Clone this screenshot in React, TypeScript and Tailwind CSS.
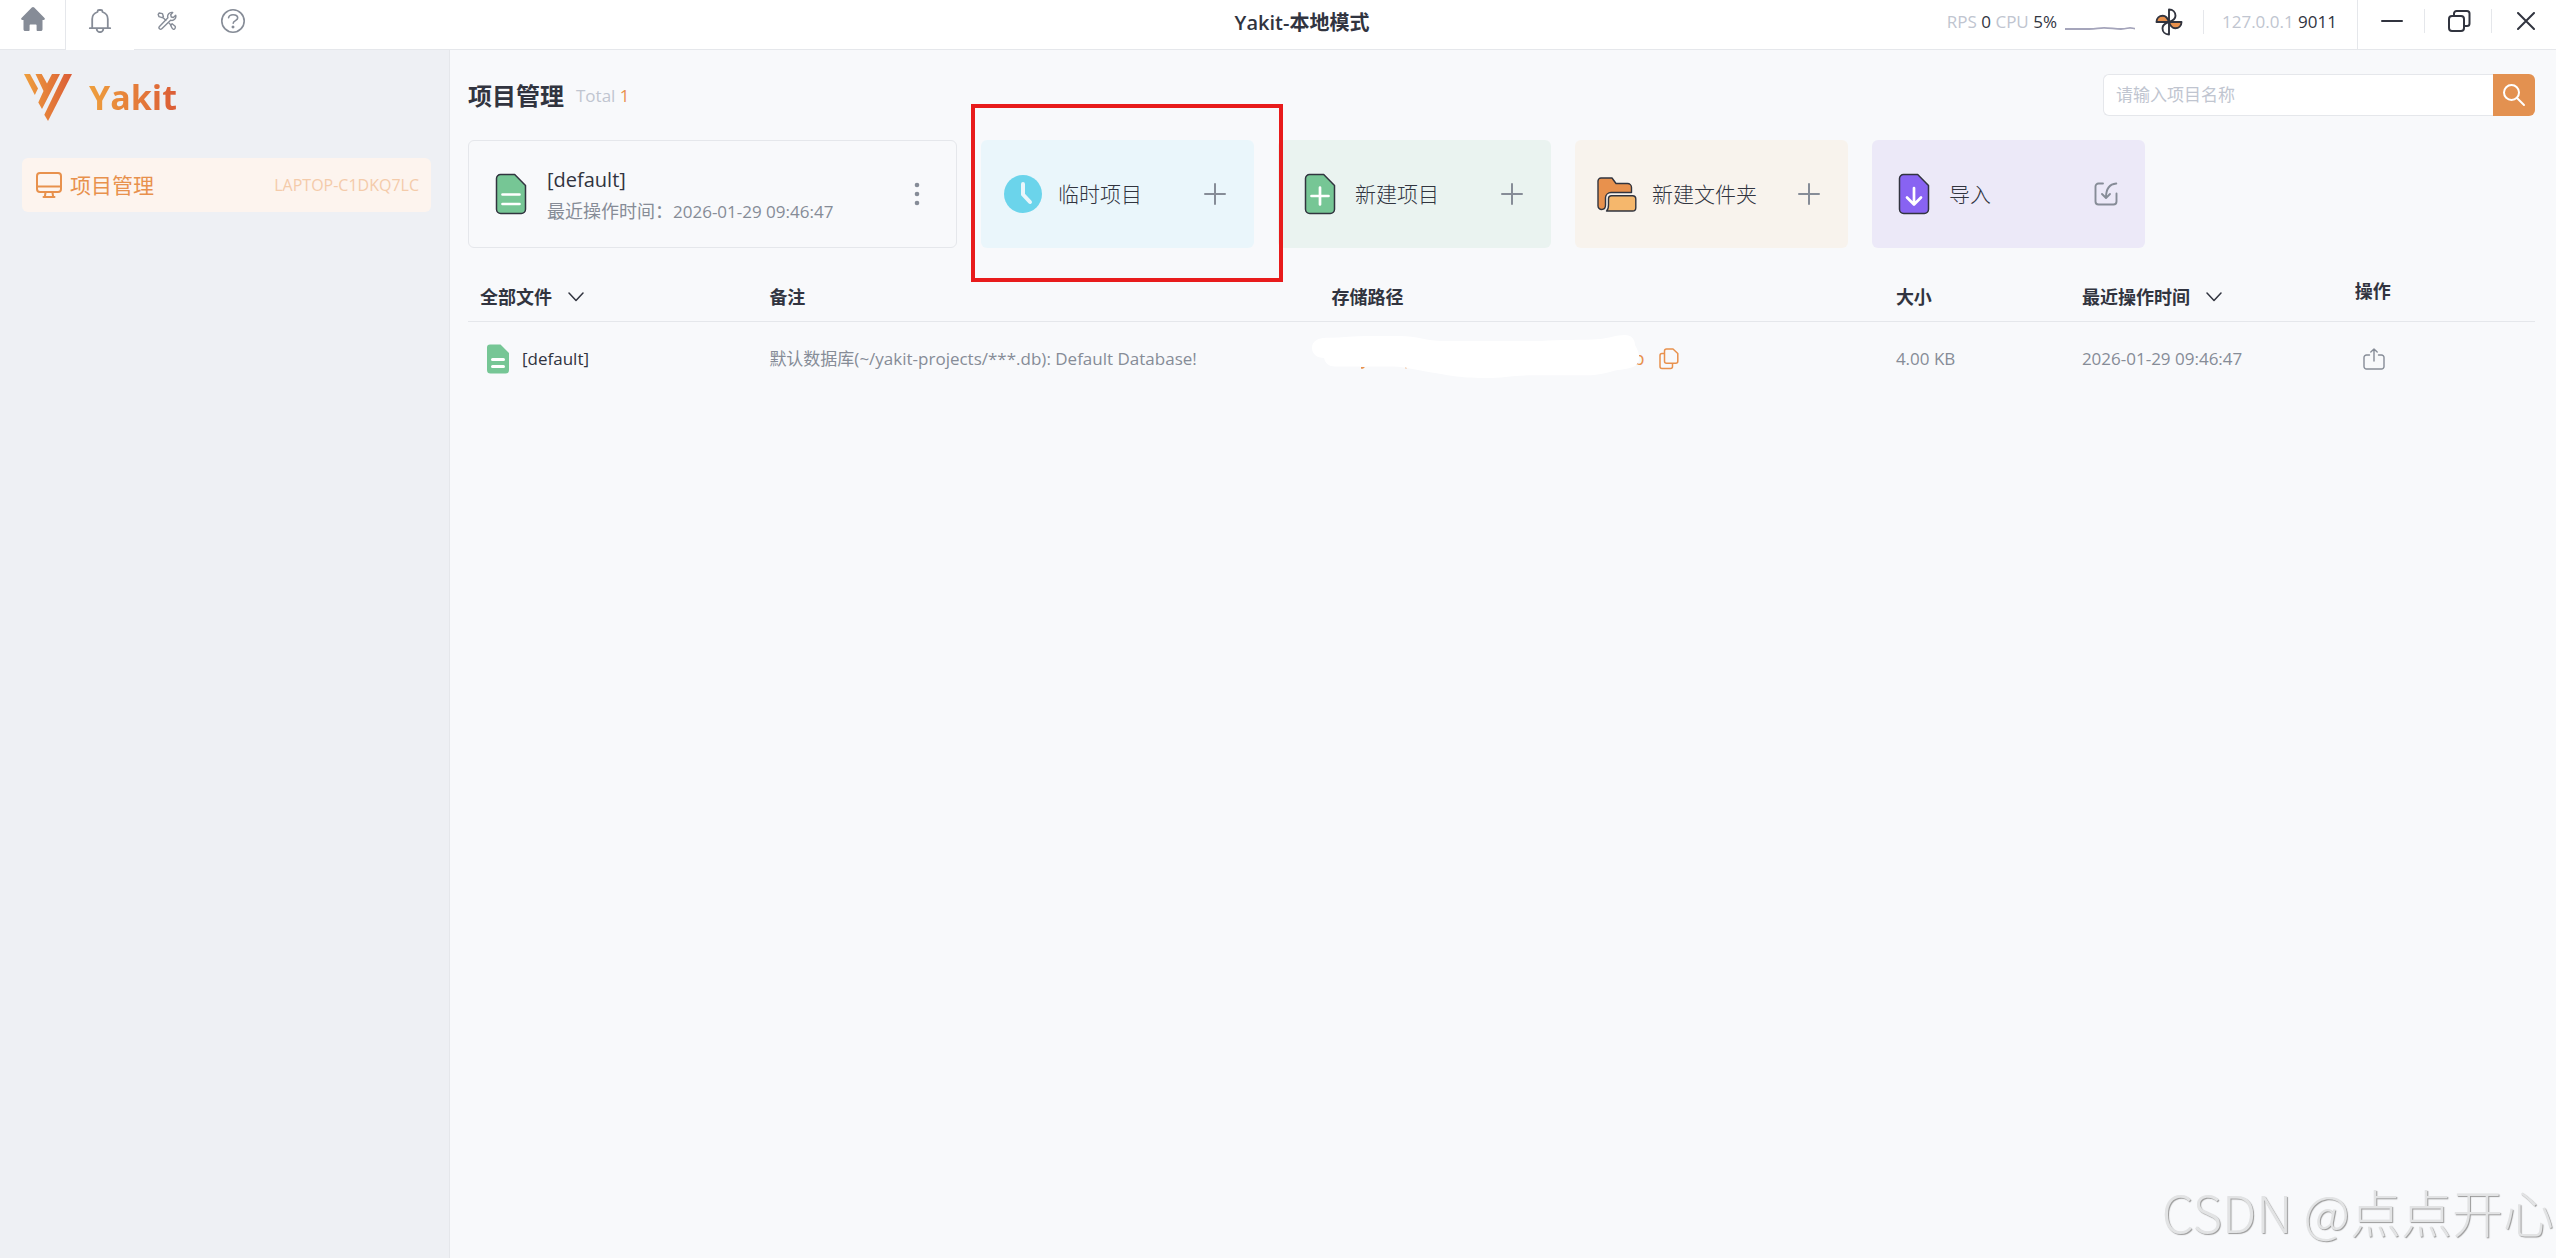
import { FC, ReactNode, useState } from 'react';

interface Project {
  id: number;
  name: string;
  remark: string;
  pathEnd: string;
  size: string;
  updatedAt: string;
}

interface ActionCard {
  title: string;
  bg: string;
  icon: ReactNode;
  action: ReactNode;
  marked?: boolean;
}

const projects: Project[] = [
  {
    id: 1,
    name: '[default]',
    remark: '默认数据库(~/yakit-projects/***.db): Default Database!',
    pathEnd: 'b',
    size: '4.00 KB',
    updatedAt: '2026-01-29 09:46:47',
  },
];

const HomeIcon: FC = () => (
  <svg className="w-6 h-6" viewBox="0 0 24 24" fill="#868c97">
    <path d="M10.8.6a1.7 1.7 0 0 1 2.4 0l10.3 10.3c.8.8.3 2-.8 2h-1.200v9.300c0 1-.7 1.800-1.700 1.800h-3.200c-.6 0-1-.4-1-1v-4.400c0-.6-.4-1-1-1h-5c-.6 0-1 .4-1 1V23c0 .6-.4 1-1 1H4.200c-1 0-1.700-.8-1.700-1.800v-9.300H1.300c-1.100 0-1.600-1.200-.8-2z" />
  </svg>
);

const BellIcon: FC = () => (
  <svg className="w-6 h-6" viewBox="0 0 24 24" fill="none" stroke="#868c97" strokeWidth="1.8" strokeLinecap="round" strokeLinejoin="round">
    <path d="M1.800 19.200h20.400M4.200 19.200V10c0-3.500 2.200-6 5.300-7V2.500a1.600 1.600 0 0 1 1.600-1.500h1.800a1.600 1.600 0 0 1 1.600 1.500V3c3.100 1 5.300 3.500 5.300 7v9.200M8.700 19.500v.4a3.300 3.300 0 0 0 6.600 0v-.4" />
  </svg>
);

const ToolsIcon: FC = () => (
  <svg className="w-5 h-5" viewBox="0 0 20 20" fill="none" stroke="#868c97" strokeWidth="1.400" strokeLinecap="round" strokeLinejoin="round">
    <path d="M1.200 3.400l1-1.400 3.200.6 1 2.800-1.300 1.300L2 5.700zM5.600 6.200l3.200 3.100M12.200 12.300l1.800 1.700" />
    <path d="M15.700 1.500a4 4 0 0 0-4.800 5.200L2.500 15.500a1.600 1.600 0 0 0 2.300 2.300l8.800-8.600a4 4 0 0 0 5.100-4.900l-2.300 2.200-2.100-.5-.6-2.200z" />
    <path d="M13.600 14.300l1.500-1.500 3 2.500c.8 1-.3 3.300-1.600 3.100-1.200-.3-2.900-4.100-2.900-4.100z" />
  </svg>
);

const HelpIcon: FC = () => (
  <svg className="w-6 h-6" viewBox="0 0 24 24" fill="none" stroke="#868c97" strokeWidth="1.6" strokeLinecap="round">
    <circle cx="12" cy="12" r="11.200" />
    <path d="M7.600 8.700C8 6.900 9.700 5.800 12 5.800c2.700 0 4.700 1.300 4.700 3.300 0 2.600-4.500 2.400-4.500 5.100" />
    <circle cx="12" cy="18" r=".7" fill="#868c97" />
  </svg>
);

const FanIcon: FC = () => (
  <svg className="w-7 h-7" viewBox="0 0 28 28" stroke="#31343f" strokeWidth="1.900" strokeLinejoin="round">
    <path d="M14 14V1.500c4 0 6.500 2.800 6.500 6.300 0 3-2.200 4.800-6.500 6.200z" fill="#fff" />
    <path d="M14 14H26.500c0 4-2.800 6.300-6.300 6.300-3 0-4.800-2-6.200-6.300z" fill="#e8914d" />
    <path d="M14 14V26.500c-4 0-6.500-2.800-6.500-6.300 0-3 2.200-4.800 6.500-6.200z" fill="#fff" />
    <path d="M14 14H1.500c0-4 2.800-6.300 6.300-6.300 3 0 4.800 2 6.200 6.300z" fill="#e8914d" />
  </svg>
);

const LogoMark: FC = () => (
  <svg className="w-12 h-[47px]" viewBox="0 0 48 47">
    <defs>
      <linearGradient id="logo" x1="0" y1="0" x2="48" y2="0" gradientUnits="userSpaceOnUse">
        <stop offset="0" stopColor="#ee9f3d" />
        <stop offset="1" stopColor="#db5c36" />
      </linearGradient>
    </defs>
    <g fill="url(#logo)">
      <path d="M0 0h6l8 14.500-3.200 6.500z" />
      <path d="M11.500 0h6.200l5.300 9.500L28 0h8L18 35l-3.700-6.500 5.200-11.500z" />
      <path d="M40 0h8L24 47l-3.700-6.300z" />
    </g>
  </svg>
);

const FileIcon: FC<{ fill: string; children: ReactNode }> = ({ fill, children }) => (
  <svg className="w-8 h-[42px]" viewBox="0 0 32 42" strokeLinecap="round" strokeLinejoin="round">
    <path d="M5.500 1.500h14.200L30.500 12.500v23.800a4.200 4.200 0 0 1-4.200 4.200H5.700a4.200 4.200 0 0 1-4.200-4.200V5.500a4 4 0 0 1 4-4z" fill={fill} stroke="#31343f" strokeWidth="1.500" />
    <g fill="none" stroke="#fff" strokeWidth="2.700">{children}</g>
  </svg>
);

const ClockIcon: FC = () => (
  <svg className="w-[38px] h-[38px]" viewBox="0 0 38 38" fill="none">
    <circle cx="19" cy="19" r="19" fill="#6bd4eb" />
    <path d="M19 9v10.500l7 7.500" stroke="#eaf6fb" strokeWidth="4" strokeLinecap="round" strokeLinejoin="round" />
  </svg>
);

const FolderIcon: FC = () => (
  <svg className="w-10 h-[35px]" viewBox="0 0 40 35" stroke="#31343f" strokeWidth="1.400" strokeLinejoin="round">
    <path d="M4 1h11l4 5.500H30.500a4 4 0 0 1 4 4V15.500H14a5.500 5.500 0 0 0-5.500 5V28c0 3-1.500 4.500-3.800 4.500A3.600 3.600 0 0 1 1 29V4a3 3 0 0 1 3-3z" fill="#e8914d" />
    <path d="M14.500 18.700H35.500a3.300 3.300 0 0 1 3.300 3.300v8.700a3.300 3.300 0 0 1-3.300 3.300H9.500c2-1.500 2-3 2-6v-6.300a3 3 0 0 1 3-3z" fill="#f5b76c" />
  </svg>
);

const PlusIcon: FC = () => (
  <svg className="w-6 h-6" viewBox="0 0 24 24" stroke="#868c97" strokeWidth="2" strokeLinecap="round">
    <path d="M12 2v20M2 12h20" />
  </svg>
);

const ImportIcon: FC = () => (
  <svg className="w-6 h-6" viewBox="0 0 24 24" fill="none" stroke="#868c97" strokeWidth="1.900" strokeLinecap="round" strokeLinejoin="round">
    <path d="M9 1.500H4.500a3 3 0 0 0-3 3v15a3 3 0 0 0 3 3h15a3 3 0 0 0 3-3V11.500M22.300 1.500C16.500 2 12 5.500 12 15.500M8 12l4 4 4-4" />
  </svg>
);

const ChevronIcon: FC = () => (
  <svg className="w-4 h-[10px]" viewBox="0 0 16 10" fill="none" stroke="#31343f" strokeWidth="1.500" strokeLinecap="round" strokeLinejoin="round">
    <path d="M1 1l7 7.500L15 1" />
  </svg>
);

const cards: ActionCard[] = [
  { title: '临时项目', bg: 'bg-[#eaf6fb]', icon: <ClockIcon />, action: <PlusIcon />, marked: true },
  {
    title: '新建项目',
    bg: 'bg-[#eaf3f0]',
    icon: <FileIcon fill="#76c695"><path d="M16 14.500v17M7.500 23h17" /></FileIcon>,
    action: <PlusIcon />,
  },
  { title: '新建文件夹', bg: 'bg-[#f8f3ed]', icon: <FolderIcon />, action: <PlusIcon /> },
  {
    title: '导入',
    bg: 'bg-[#ece9f8]',
    icon: <FileIcon fill="#8863f2"><path d="M16 15v16M9 24.500l7 7 7-7" /></FileIcon>,
    action: <ImportIcon />,
  },
];

const TopBar: FC = () => (
  <header className="grid grid-cols-[1fr_auto_1fr] h-[50px] bg-white border-b border-[#e5e7eb]">
    <nav className="flex">
      <button aria-label="首页" className="w-[66px] pb-[11px] flex items-center justify-center border-r border-[#e5e7eb]"><HomeIcon /></button>
      <button aria-label="消息" className="w-[68px] -mb-px pb-2 flex items-center justify-center bg-white"><BellIcon /></button>
      <button aria-label="工具" className="w-[66px] pb-[7px] flex items-center justify-center"><ToolsIcon /></button>
      <button aria-label="帮助" className="w-[66px] pb-[7px] flex items-center justify-center"><HelpIcon /></button>
    </nav>
    <h1 className="pl-12 pt-[9px] text-[20px] leading-[28px] font-semibold">Yakit-本地模式</h1>
    <div className="flex justify-end text-[17px] text-[#c0c5d0]">
      <div className="flex items-center pb-[5px] pr-5">
        <span>RPS <span className="text-[#31343f]">0</span> CPU <span className="text-[#31343f]">5%</span></span>
        <svg className="w-[70px] h-4 ml-2 mt-3" viewBox="0 0 70 16" fill="none" stroke="#a5a5bb" strokeWidth="1.800">
          <path d="M0 9h24c8 0 9-1.200 15-1.200S50 9 56 9s6-1.200 9-1.200 3 .8 5 .8" />
        </svg>
        <span className="ml-5"><FanIcon /></span>
        <span className="ml-5 h-6 w-px bg-[#e5e7eb]" />
        <span className="ml-[18px]">127.0.0.1 <span className="text-[#31343f]">9011</span></span>
      </div>
      <div className="flex items-center pb-[7px] border-l border-[#e5e7eb] pr-[21px]">
        <button aria-label="最小化" className="ml-[22px]">
          <svg className="w-6 h-6" viewBox="0 0 24 24" stroke="#31343f" strokeWidth="2" strokeLinecap="round"><path d="M2 12h20" /></svg>
        </button>
        <span className="ml-5 h-6 w-px bg-[#e5e7eb]" />
        <button aria-label="还原" className="ml-[22px]">
          <svg className="w-6 h-6" viewBox="0 0 24 24" fill="none" stroke="#31343f" strokeWidth="2">
            <rect x="2" y="7" width="15" height="15" rx="3" />
            <path d="M7 7V4.500A2.500 2.500 0 0 1 9.500 2H20a2.500 2.500 0 0 1 2.500 2.500v10A2.500 2.500 0 0 1 20 17h-3" />
          </svg>
        </button>
        <span className="ml-5 h-6 w-px bg-[#e5e7eb]" />
        <button aria-label="关闭" className="ml-[25px]">
          <svg className="w-[18px] h-[18px]" viewBox="0 0 18 18" stroke="#31343f" strokeWidth="2" strokeLinecap="round"><path d="M1 1l16 16M17 1L1 17" /></svg>
        </button>
      </div>
    </div>
  </header>
);

const Sidebar: FC = () => (
  <aside className="w-[450px] shrink-0 bg-[#eef0f4] border-r border-[#e5e7eb] pl-[22px] pr-[18px]">
    <div className="flex items-start pt-6 pl-[2px]">
      <LogoMark />
      <span className="ml-[17px] text-[34px] leading-[46px] font-bold bg-linear-to-r from-[#ee9f3d] to-[#db5c36] bg-clip-text text-transparent">Yakit</span>
    </div>
    <a href="#projects" className="mt-[37px] h-[54px] flex items-center rounded-md bg-[#fdf4ee] pl-[14px] pr-3 text-[#e8914d]">
      <svg className="w-[26px] h-[26px]" viewBox="0 0 26 26" fill="none" stroke="#e8914d" strokeWidth="2" strokeLinecap="round" strokeLinejoin="round">
        <rect x="1" y="1" width="24" height="19" rx="3" />
        <path d="M1 14.500h24M9.500 20.500l-.6 4M16.500 20.500l.6 4M7.500 25h11" />
      </svg>
      <span className="ml-2 pt-[2px] text-[21px]">项目管理</span>
      <span className="ml-auto text-[16px] text-[#f4cbaa]">LAPTOP-C1DKQ7LC</span>
    </a>
  </aside>
);

const App: FC = () => {
  const [keyword, setKeyword] = useState('');
  const rows = projects.filter((project) => project.name.includes(keyword));

  return (
    <div className="min-h-screen flex flex-col bg-[#f8f9fb] text-[#31343f] font-['Open_Sans','Noto_Sans_CJK_SC',sans-serif]">
      <TopBar />
      <div className="flex flex-1">
        <Sidebar />
        <main id="projects" className="flex-1 min-w-0 pl-[18px] pr-[21px] pt-6">
          <div className="flex items-center justify-between">
            <div className="flex items-center pt-[2px]">
              <h2 className="text-[24px] leading-[36px] font-bold">项目管理</h2>
              <span className="ml-3 text-[17px] text-[#c0c5d0]">Total <span className="text-[#e8914d]">{projects.length}</span></span>
            </div>
            <form className="flex h-[42px] w-[432px]" onSubmit={(e) => e.preventDefault()}>
              <input
                type="text"
                aria-label="项目名称"
                value={keyword}
                onChange={(e) => setKeyword(e.target.value)}
                placeholder="请输入项目名称"
                className="flex-1 min-w-0 bg-white border border-r-0 border-[#e5e7eb] rounded-l-md pl-3 text-[17px] placeholder:text-[#c0c5d0]"
              />
              <button type="submit" aria-label="搜索" className="w-[42px] rounded-r-md bg-[#e39150] flex items-center justify-center">
                <svg className="w-6 h-6" viewBox="0 0 24 24" fill="none" stroke="#fff" strokeWidth="2" strokeLinecap="round">
                  <circle cx="9.500" cy="9.500" r="7.500" />
                  <path d="M15 15l7 7" />
                </svg>
              </button>
            </form>
          </div>

          <div className="mt-6 flex gap-6">
            <section className="w-[489px] h-[108px] shrink-0 flex items-center border border-[#e5e7eb] rounded-md pl-[26px] pr-[27px]">
              <FileIcon fill="#76c695"><path d="M7.500 21.500h17M7.500 31h17" /></FileIcon>
              <div className="ml-5 pt-1">
                <p className="text-[20px] leading-[30px]">[default]</p>
                <p className="text-[18px] leading-[32px] text-[#868c97]">最近操作时间：<span className="text-[17px]">2026-01-29 09:46:47</span></p>
              </div>
              <button aria-label="更多" className="ml-auto">
                <svg className="w-6 h-6" viewBox="0 0 24 24" fill="#868c97">
                  <circle cx="12" cy="3" r="2.300" />
                  <circle cx="12" cy="12" r="2.300" />
                  <circle cx="12" cy="21" r="2.300" />
                </svg>
              </button>
            </section>
            {cards.map((card) => (
              <div key={card.title} className="relative w-[273px] min-w-0">
                <button className={`w-full h-[108px] flex items-center rounded-md pl-[18px] pr-[27px] ${card.bg}`}>
                  <span className="w-12 flex justify-center">{card.icon}</span>
                  <span className="ml-[11px] pt-[2px] text-[21px] font-light">{card.title}</span>
                  <span className="ml-auto">{card.action}</span>
                </button>
                {card.marked && <div className="absolute z-10 -left-[10px] -right-[29px] -top-9 -bottom-[34px] border-4 border-[#e81b1b] pointer-events-none" />}
              </div>
            ))}
          </div>

          <table className="mt-6 w-full table-fixed text-left text-[17px] text-[#868c97]">
            <thead className="text-[18px] text-[#31343f]">
              <tr className="h-[49px] border-b border-[#e5e7eb]">
                <th className="w-[14%] pl-3 pt-[2px] font-bold">
                  <button className="flex items-center gap-4">全部文件<ChevronIcon /></button>
                </th>
                <th className="w-[27.2%] pl-3 pt-[2px] font-bold">备注</th>
                <th className="w-[27.3%] pl-3 pt-[2px] font-bold">存储路径</th>
                <th className="w-[9%] pl-3 pt-[2px] font-bold">大小</th>
                <th className="w-[13.2%] pl-3 pt-[2px] font-bold">
                  <button className="flex items-center gap-4">最近操作时间<ChevronIcon /></button>
                </th>
                <th className="w-[9.3%] pl-3 pb-[10px] font-bold">操作</th>
              </tr>
            </thead>
            <tbody>
              {rows.map((project) => (
                <tr key={project.id} className="h-[75px]">
                  <td className="pl-[18px]">
                    <div className="flex items-center gap-3 text-[#31343f]">
                      <svg className="w-6 h-[30px]" viewBox="0 0 24 30">
                        <path d="M4 .5h10.500L23 9v17a3.500 3.500 0 0 1-3.500 3.500h-15A3.500 3.500 0 0 1 1 26V3.500a3 3 0 0 1 3-3z" fill="#76c695" />
                        <path d="M6.500 15.500h11M6.500 22.500h11" stroke="#fff" strokeWidth="3" strokeLinecap="round" />
                      </svg>
                      {project.name}
                    </div>
                  </td>
                  <td className="pl-3">{project.remark}</td>
                  <td>
                    <div className="relative flex items-center text-[#e8914d]">
                      <span className="w-[325px] text-right text-[18px]">{project.pathEnd}</span>
                      {/* white brush stroke that hides the path */}
                      <svg className="absolute -left-2 -top-[10px] w-[332px] h-11" viewBox="0 0 332 44">
                        <path d="M49 32h4l-2 1.800h-2zM93 32h3l-1 1.200h-2z" fill="#e8914d" />
                        <path d="M0 13C0 6 6 3 14 2.700c14 .3 28-1.700 42-1.700h32c16 0 28 5 42 5h99c20-1.700 40-.5 58-2 10-.7 17-4 26-4 6 0 10 4 10 10 3 5 5 11 4 15-1 3-3 6-6 7-9 3-16 2.500-23 5-16 4-20 3.300-30 3.300h-47c-20 0-31 2.700-46 2.700-28 .2-39-3-64-7-14-2.500-20-4.500-35-4.500H23c-6 0-10-3.500-11-8.500C5 23 0 19 0 13z" fill="#fff" />
                      </svg>
                      <button aria-label="复制路径" className="ml-[14px]">
                        <svg className="w-5 h-[22px]" viewBox="0 0 20 22" fill="none" stroke="#e8914d" strokeWidth="1.500" strokeLinejoin="round">
                          <path d="M7.500 1h6.500l4.800 4.500v7.800a2 2 0 0 1-2 2H7.500a2 2 0 0 1-2-2V3a2 2 0 0 1 2-2z" />
                          <path d="M5.500 5.500H3a2 2 0 0 0-2 2v11a2 2 0 0 0 2 2h8.500a2 2 0 0 0 2-2v-3" />
                        </svg>
                      </button>
                    </div>
                  </td>
                  <td className="pl-3">{project.size}</td>
                  <td className="pl-3">{project.updatedAt}</td>
                  <td className="pl-5">
                    <button aria-label="导出" className="block">
                      <svg className="w-[22px] h-[22px]" viewBox="0 0 22 22" fill="none" stroke="#868c97" strokeWidth="1.400" strokeLinecap="round" strokeLinejoin="round">
                        <path d="M6.500 7H3.500A2.500 2.500 0 0 0 1 9.500v9A2.500 2.500 0 0 0 3.500 21h15a2.500 2.500 0 0 0 2.500-2.500v-9A2.500 2.500 0 0 0 18.500 7h-3M11 13V1M7.800 4L11 1l3.200 3" />
                      </svg>
                    </button>
                  </td>
                </tr>
              ))}
            </tbody>
          </table>
        </main>
      </div>
      <div className="fixed right-[2px] bottom-[11px] text-[51px] leading-[72px] font-light text-[#e2e3e4] [text-shadow:1px_1px_1px_#999999] font-['Noto_Sans_CJK_SC',sans-serif] pointer-events-none">CSDN @点点开心</div>
    </div>
  );
};

export default App;
